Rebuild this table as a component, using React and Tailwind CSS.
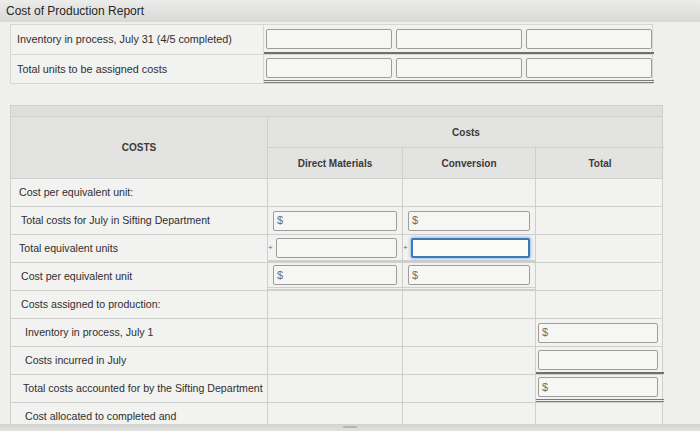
import React from 'react';

const font = { fontFamily: '"Liberation Sans", Arial, sans-serif' };

function Box({ dollar = false, focused = false, mark = false, className = '' }) {
  return (
    <div className={`relative flex items-center ${className}`}>
      {mark && <span className="absolute -left-[5px] text-[8px] leading-none text-[#666]">+</span>}
      <div
        className={
          focused
            ? 'flex h-[20px] w-full items-center rounded-[2px] border-2 border-[#3f78b8] bg-[#fbfbfa] px-[3px] shadow-[0_0_3px_1px_rgba(90,150,220,0.55)]'
            : 'flex h-[20px] w-full items-center rounded-[2px] border border-[#9d9d9b] bg-[#f6f6f4] px-[3px]'
        }
      >
        {dollar && <span className="text-[11px] leading-none text-[#6d6d6d]">$</span>}
      </div>
    </div>
  );
}

function Row({ label, indent = 'pl-[10px]', cells = [null, null, null], line = '' }) {
  return (
    <div className="grid h-[28px] grid-cols-[257px_135px_133px_128px] border-b border-[#cfcfcd]">
      <div className={`flex items-center whitespace-nowrap border-r border-[#cfcfcd] text-[10.6px] text-[#2f2f2f] ${indent}`}>{label}</div>
      {cells.map((c, i) => (
        <div
          key={i}
          className={`flex items-center ${i < 2 ? 'border-r border-[#cfcfcd] px-[5px]' : 'pl-[2px] pr-[6px]'} ${c && line ? line : ''}`}
        >
          {c}
        </div>
      ))}
    </div>
  );
}

export default function App() {
  return (
    <div className="flex h-[431px] w-[700px] flex-col overflow-hidden bg-[#efefed]" style={font}>
      <div className="flex h-[22px] shrink-0 items-center bg-gradient-to-b from-[#ececea] to-[#d8d8d6] pl-[6px] text-[12px] text-[#262626]">
        Cost of Production Report
      </div>

      <div className="min-h-0 flex-1 overflow-hidden">
        <div className="ml-[10px] mt-[2px] w-[643px] border border-[#d6d6d4] bg-[#f2f2f0]">
          <div className="grid h-[30px] grid-cols-[253px_130px_130px_130px] border-b border-[#d6d6d4]">
            <div className="flex items-center border-r border-[#d6d6d4] pl-[6px] text-[10.8px] text-[#2f2f2f]">
              Inventory in process, July 31 (4/5 completed)
            </div>
            {[0, 1, 2].map((i) => (
              <div key={i} className="flex items-center border-b-2 border-[#6f6f6d] px-[2px]">
                <Box className="w-full" />
              </div>
            ))}
          </div>
          <div className="grid h-[28px] grid-cols-[253px_130px_130px_130px]">
            <div className="flex items-center border-r border-[#d6d6d4] pl-[6px] text-[10.8px] text-[#2f2f2f]">
              Total units to be assigned costs
            </div>
            {[0, 1, 2].map((i) => (
              <div key={i} className="flex items-center border-b-[3px] border-double border-[#7a7a78] px-[2px]">
                <Box className="w-full" />
              </div>
            ))}
          </div>
        </div>

        <div className="ml-[10px] mt-[21px] w-[653px] border border-[#cfcfcd] bg-[#f2f2f0]">
          <div className="h-[11px] border-b border-[#cfcfcd] bg-[#dededc]" />
          <div className="grid grid-cols-[257px_135px_133px_128px] border-b border-[#cfcfcd] bg-[#e3e3e1] text-[10px] font-bold text-[#3a3a3a]">
            <div className="row-span-2 flex items-center justify-center border-r border-[#cfcfcd]">COSTS</div>
            <div className="col-span-3 flex h-[31px] items-center justify-center border-b border-[#cfcfcd]">Costs</div>
            <div className="flex h-[30px] items-center justify-center border-r border-[#cfcfcd]">Direct Materials</div>
            <div className="flex h-[30px] items-center justify-center border-r border-[#cfcfcd]">Conversion</div>
            <div className="flex h-[30px] items-center justify-center">Total</div>
          </div>

          <Row label="Cost per equivalent unit:" indent="pl-[8px]" />
          <Row label="Total costs for July in Sifting Department" cells={[<Box dollar className="w-full" />, <Box dollar className="w-full" />, null]} />
          <Row
            label="Total equivalent units"
            indent="pl-[8px]"
            line="border-b-2 border-[#6f6f6d]"
            cells={[<Box mark className="w-full pl-[3px]" />, <Box mark focused className="w-full pl-[3px]" />, null]}
          />
          <Row
            label="Cost per equivalent unit"
            line="border-b-[3px] border-double border-[#7a7a78]"
            cells={[<Box dollar className="w-full" />, <Box dollar className="w-full" />, null]}
          />
          <Row label="Costs assigned to production:" />
          <Row label="Inventory in process, July 1" indent="pl-[14px]" cells={[null, null, <Box dollar className="w-full" />]} />
          <Row
            label="Costs incurred in July"
            indent="pl-[14px]"
            line="border-b-2 border-[#6f6f6d]"
            cells={[null, null, <Box className="w-full" />]}
          />
          <Row
            label="Total costs accounted for by the Sifting Department"
            indent="pl-[12px]"
            line="border-b-[3px] border-double border-[#7a7a78]"
            cells={[null, null, <Box dollar className="w-full" />]}
          />
          <Row label="Cost allocated to completed and" indent="pl-[14px]" />
        </div>
      </div>

      <div className="flex h-[7px] shrink-0 justify-center bg-gradient-to-b from-[#d2d2d0] to-[#e2e2e0]">
        <div className="mt-[2px] h-[2px] w-[14px] rounded-full bg-[#b5b5b3]" />
      </div>
    </div>
  );
}
